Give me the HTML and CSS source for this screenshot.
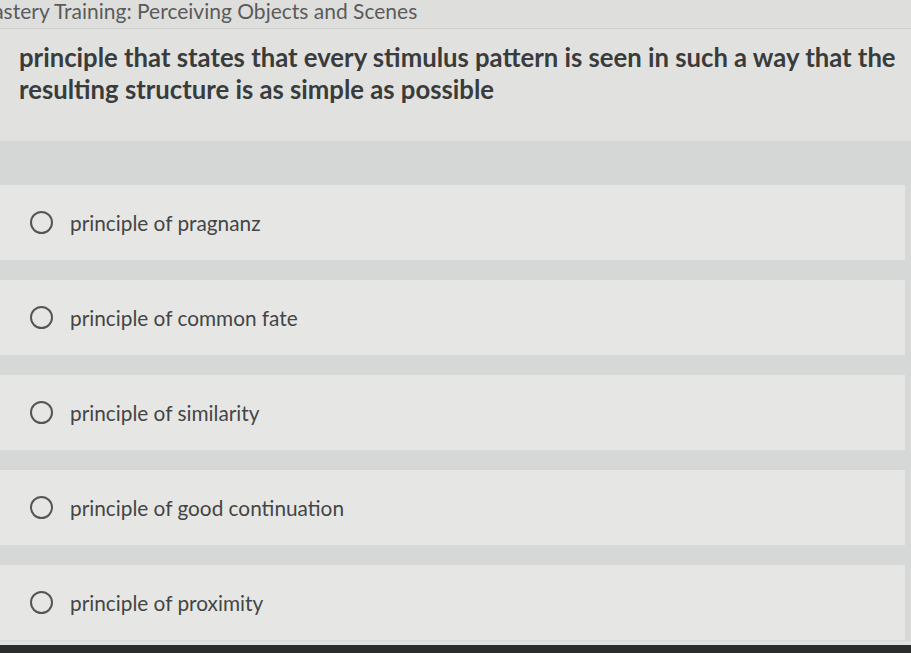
FILE: index.html
```html
<!DOCTYPE html>
<html lang="en">
<head>
  <meta charset="UTF-8">
  <title>Perceiving Objects and Scenes</title>
  <link rel="stylesheet" href="styles.css">
</head>
<body>
  <header class="topbar">
    <span class="course-title">Mastery Training: Perceiving Objects and Scenes</span>
  </header>

  <main class="question">
    <p class="prompt">principle that states that every stimulus pattern is seen in such a way that the resulting structure is as simple as possible</p>

    <div class="divider"></div>

    <ul class="choices">
      <li class="choice"><span class="radio"></span>principle of pragnanz</li>
      <li class="choice"><span class="radio"></span>principle of common fate</li>
      <li class="choice"><span class="radio"></span>principle of similarity</li>
      <li class="choice"><span class="radio"></span>principle of good continuation</li>
      <li class="choice"><span class="radio"></span>principle of proximity</li>
    </ul>
  </main>

  <footer class="bottombar"></footer>
</body>
</html>
```

FILE: styles.css
```css
body {
  margin: 0;
  height: 653px;
  overflow: hidden;
  font-family: Lato, 'Noto Sans', sans-serif;
  background-color: #e1e2e0;
  color: #474848;
}

.topbar {
  height: 28px;
  border-bottom: 1px solid #cfd0ce;
  background-color: #dedfdd;
  overflow: hidden;
  white-space: nowrap;
}

.course-title {
  display: block;
  margin-left: -26px;
  margin-top: -2px;
  font-size: 21px;
  line-height: 26px;
  color: #5a5b5a;
}

.prompt {
  margin: 12px 0 0 19px;
  font-size: 25.7px;
  font-weight: bold;
  line-height: 32px;
  color: #3a3b3b;
  width: 892px;
}

.divider {
  margin-top: 36px;
  height: 44px;
  background-color: #d5d7d6;
}

.choices {
  list-style: none;
  margin: 0;
  padding: 0;
  display: flex;
  flex-direction: column;
  gap: 19px;
  background-color: #d6d8d7;
}

.choice {
  height: 75px;
  margin-right: 6px;
  display: flex;
  align-items: center;
  gap: 17px;
  padding-left: 30px;
  background-color: #e6e7e5;
  border-bottom: 1px solid #d9dad8;
  font-size: 20.8px;
  color: #444545;
}

.radio {
  width: 19px;
  height: 19px;
  border: 2.5px solid #555;
  border-radius: 50%;
  flex-shrink: 0;
}

.bottombar {
  position: fixed;
  left: 0;
  right: 0;
  bottom: 0;
  height: 8px;
  background-color: #2b2c2c;
}
```
